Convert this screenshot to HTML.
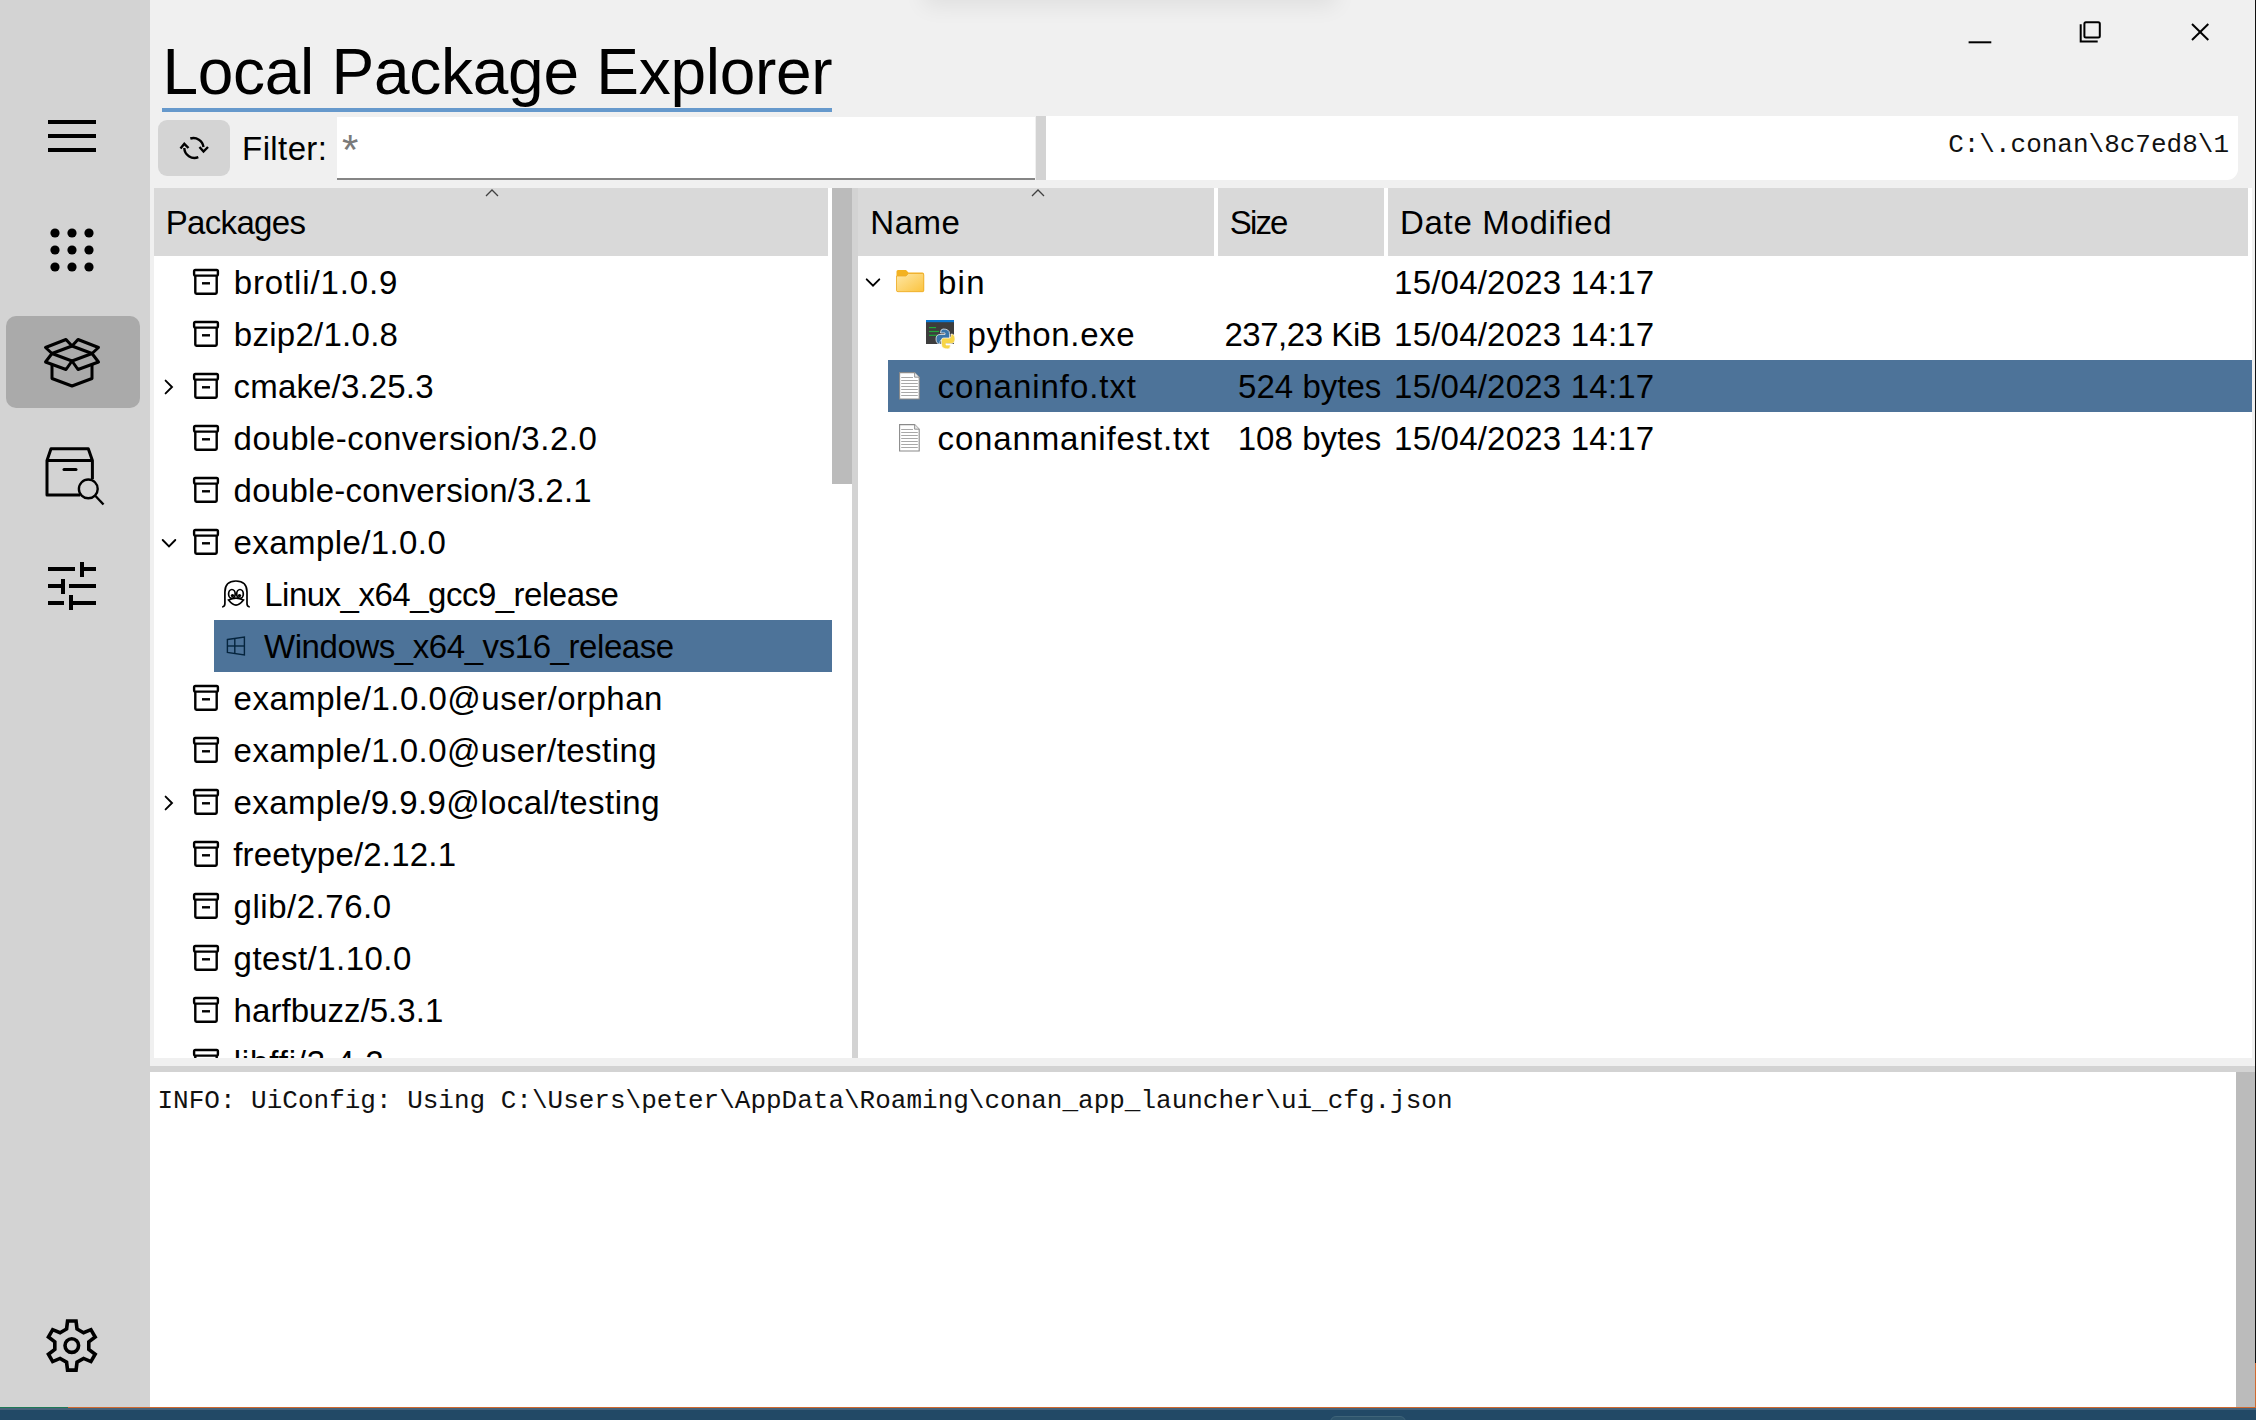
<!DOCTYPE html>
<html><head><meta charset="utf-8">
<style>
html,body{margin:0;padding:0;}
body{width:2256px;height:1420px;position:relative;overflow:hidden;background:#f0f0f0;font-family:"Liberation Sans",sans-serif;}
.a{position:absolute;}
.t{position:absolute;line-height:0;white-space:pre;font-family:"Liberation Sans",sans-serif;}
.m{position:absolute;line-height:0;white-space:pre;font-family:"Liberation Mono",monospace;}
svg{position:absolute;overflow:visible;}
</style></head><body>
<!-- top shadow -->
<div class="a" style="left:930px;top:-30px;width:400px;height:30px;box-shadow:0 0 22px 6px rgba(0,0,0,0.07);background:#000;"></div>
<!-- sidebar -->
<div class="a" style="left:0;top:0;width:150px;height:1407px;background:#d3d3d3;"></div>
<div class="a" style="left:6px;top:316px;width:134px;height:92px;background:#aaaaaa;border-radius:10px;"></div>
<!-- hamburger -->
<div class="a" style="left:48px;top:120px;width:48px;height:4px;background:#000;"></div>
<div class="a" style="left:48px;top:134px;width:48px;height:4px;background:#000;"></div>
<div class="a" style="left:48px;top:148px;width:48px;height:4px;background:#000;"></div>
<!-- dots -->
<svg style="left:0;top:0" width="150" height="300">
<g fill="#000">
<circle cx="55" cy="233" r="4.6"/><circle cx="72" cy="233" r="4.6"/><circle cx="89" cy="233" r="4.6"/>
<circle cx="55" cy="250" r="4.6"/><circle cx="72" cy="250" r="4.6"/><circle cx="89" cy="250" r="4.6"/>
<circle cx="55" cy="267" r="4.6"/><circle cx="72" cy="267" r="4.6"/><circle cx="89" cy="267" r="4.6"/>
</g></svg>
<!-- open box -->
<svg style="left:0;top:0" width="150" height="420">
<g fill="none" stroke="#000" stroke-width="3" stroke-linejoin="round">
<polygon points="72,346 52,353.5 72,361 92,353.5"/>
<polyline points="52,353.5 45.5,347.5 66,339.5 72,346 78,339.5 98.5,347.5 92,353.5"/>
<polyline points="52,353.5 45.5,362 66,369.5 72,361 78,369.5 98.5,362 92,353.5"/>
<polyline points="52,364.5 52,378.5 72,386 92,378.5 92,364.5"/>
</g></svg>
<!-- archive search -->
<svg style="left:0;top:0" width="150" height="520">
<g fill="none" stroke="#000" stroke-width="3" stroke-linejoin="round">
<polyline points="80,495 47,495 47,460.5 51,448.7 88.3,448.7 92.4,460.5 92.4,479"/>
<line x1="47" y1="460.5" x2="92.4" y2="460.5"/>
<line x1="64" y1="469.6" x2="76" y2="469.6" stroke-linecap="round"/>
</g>
<circle cx="88.3" cy="488.9" r="9.4" fill="none" stroke="#000" stroke-width="2.4"/>
<line x1="95.5" y1="496" x2="103.5" y2="504.5" stroke="#000" stroke-width="2.4"/>
</svg>
<!-- sliders -->
<div class="a" style="left:48px;top:567px;width:27px;height:4px;background:#000"></div>
<div class="a" style="left:83.5px;top:567px;width:12.5px;height:4px;background:#000"></div>
<div class="a" style="left:79.5px;top:562px;width:4px;height:15px;background:#000"></div>
<div class="a" style="left:48px;top:584px;width:12.5px;height:4px;background:#000"></div>
<div class="a" style="left:68.5px;top:584px;width:27.5px;height:4px;background:#000"></div>
<div class="a" style="left:60.5px;top:578.5px;width:4px;height:15px;background:#000"></div>
<div class="a" style="left:48px;top:600.5px;width:16px;height:4px;background:#000"></div>
<div class="a" style="left:72.5px;top:600.5px;width:23.5px;height:4px;background:#000"></div>
<div class="a" style="left:68.5px;top:595px;width:4px;height:15px;background:#000"></div>
<!-- gear -->
<svg style="left:0;top:0" width="150" height="1400">
<path id="gear" fill="none" stroke="#000" stroke-width="3.6" stroke-linejoin="miter" d="M66.57,1329.01 L67.56,1321.06 L76.04,1321.06 L77.03,1329.01 L83.56,1332.77 L90.93,1329.66 L95.17,1337.00 L88.79,1341.83 L88.79,1349.37 L95.17,1354.20 L90.93,1361.54 L83.56,1358.43 L77.03,1362.19 L76.04,1370.14 L67.56,1370.14 L66.57,1362.19 L60.04,1358.43 L52.67,1361.54 L48.43,1354.20 L54.81,1349.37 L54.81,1341.83 L48.43,1337.00 L52.67,1329.66 L60.04,1332.77 Z"/>
<circle cx="71.8" cy="1345.6" r="6.8" fill="none" stroke="#000" stroke-width="3.6"/>
</svg>

<!-- title underline -->
<div class="a" style="left:162px;top:108px;width:670px;height:4px;background:#6699cc;"></div>
<!-- window controls -->
<svg style="left:0;top:0" width="2256" height="60">
<g fill="none" stroke="#000" stroke-width="2">
<line x1="1968.6" y1="42.3" x2="1991.3" y2="42.3"/>
<rect x="2084.4" y="22.2" width="15.4" height="15.4" rx="1.5"/>
<path d="M2080.7,24.3 V41.5 H2097.7"/>
<line x1="2192" y1="24" x2="2208.3" y2="40"/>
<line x1="2208.3" y1="24" x2="2192" y2="40"/>
</g></svg>
<!-- refresh button -->
<div class="a" style="left:158px;top:120px;width:72px;height:56px;background:#d4d4d4;border-radius:9px;"></div>
<svg style="left:0;top:0" width="300" height="200">
<g fill="none" stroke="#000" stroke-width="2.4">
<path d="M190.3,138.5 A10.2,10.2 0 0 1 203.5,147"/>
<path d="M198.3,157.2 A10.2,10.2 0 0 1 184.3,148"/>
<polyline points="180.5,148.5 184.3,143.8 188.5,148"/>
<polyline points="199.5,147 203.5,151.5 208,147"/>
</g></svg>
<!-- filter input -->
<div class="a" style="left:336.5px;top:117px;width:698.5px;height:61px;background:#fff;border-bottom:2px solid #858585;"></div>
<div class="t" style="left:342px;top:149.5px;font-size:42px;color:#7a7a7a;">*</div>
<div class="a" style="left:1036px;top:116px;width:10px;height:64px;background:#d3d3d3;"></div>
<div class="a" style="left:1046px;top:116px;width:1192px;height:64px;background:#fff;border-bottom-right-radius:11px;"></div>
<div class="m" style="right:27px;top:145px;font-size:26px;color:#111;">C:\.conan\8c7ed8\1</div>

<!-- left panel -->
<div class="a" style="left:154px;top:188px;width:698px;height:870px;background:#fff;"></div>
<div class="a" style="left:154px;top:188px;width:674px;height:68px;background:#d9d9d9;"></div>
<div class="a" style="left:832px;top:188px;width:20px;height:296px;background:#bbbbbb;"></div>
<div class="a" style="left:852px;top:188px;width:6px;height:870px;background:#d3d3d3;"></div>
<div class="a" style="left:214px;top:620px;width:618px;height:52px;background:#4d7399;"></div>
<svg style="left:0;top:0" width="900" height="1060">
<g fill="none" stroke="#404040" stroke-width="1.3"><polyline points="486,196 492,190 498,196"/><polyline points="1032,196 1038,190 1044,196"/></g>
</svg>

<!-- right panel -->
<div class="a" style="left:858px;top:188px;width:1394px;height:870px;background:#fff;"></div>
<div class="a" style="left:858px;top:188px;width:356px;height:68px;background:#d9d9d9;"></div>
<div class="a" style="left:1218px;top:188px;width:166px;height:68px;background:#d9d9d9;"></div>
<div class="a" style="left:1388px;top:188px;width:860px;height:68px;background:#d9d9d9;"></div>
<div class="a" style="left:888px;top:360px;width:1364px;height:52px;background:#4d7399;"></div>
<svg style="left:0;top:0" width="2256" height="260">
<g fill="none" stroke="#404040" stroke-width="1.3"><polyline points="1032,196 1038,190 1044,196"/></g>
</svg>

<!-- tree icons -->
<div class="a" style="left:0;top:0;width:2256px;height:1058px;overflow:hidden;"><svg style="left:0;top:0" width="2256" height="1060"><g transform="translate(0,0)" fill="none" stroke="#000" stroke-width="2.4"><rect x="194.1" y="270" width="23.8" height="5.6" rx="1.3"/><path d="M195.3,275.8 V292.6 Q195.3,293.8 196.5,293.8 H215.5 Q216.7,293.8 216.7,292.6 V275.8"/><line x1="202" y1="283.3" x2="210" y2="283.3"/></g>
<g transform="translate(0,52)" fill="none" stroke="#000" stroke-width="2.4"><rect x="194.1" y="270" width="23.8" height="5.6" rx="1.3"/><path d="M195.3,275.8 V292.6 Q195.3,293.8 196.5,293.8 H215.5 Q216.7,293.8 216.7,292.6 V275.8"/><line x1="202" y1="283.3" x2="210" y2="283.3"/></g>
<g transform="translate(0,104)" fill="none" stroke="#000" stroke-width="2.4"><rect x="194.1" y="270" width="23.8" height="5.6" rx="1.3"/><path d="M195.3,275.8 V292.6 Q195.3,293.8 196.5,293.8 H215.5 Q216.7,293.8 216.7,292.6 V275.8"/><line x1="202" y1="283.3" x2="210" y2="283.3"/></g>
<polyline points="165.6,380.6 172,387 165.6,393.4" fill="none" stroke="#000" stroke-width="1.9" stroke-linecap="round"/>
<g transform="translate(0,156)" fill="none" stroke="#000" stroke-width="2.4"><rect x="194.1" y="270" width="23.8" height="5.6" rx="1.3"/><path d="M195.3,275.8 V292.6 Q195.3,293.8 196.5,293.8 H215.5 Q216.7,293.8 216.7,292.6 V275.8"/><line x1="202" y1="283.3" x2="210" y2="283.3"/></g>
<g transform="translate(0,208)" fill="none" stroke="#000" stroke-width="2.4"><rect x="194.1" y="270" width="23.8" height="5.6" rx="1.3"/><path d="M195.3,275.8 V292.6 Q195.3,293.8 196.5,293.8 H215.5 Q216.7,293.8 216.7,292.6 V275.8"/><line x1="202" y1="283.3" x2="210" y2="283.3"/></g>
<g transform="translate(0,260)" fill="none" stroke="#000" stroke-width="2.4"><rect x="194.1" y="270" width="23.8" height="5.6" rx="1.3"/><path d="M195.3,275.8 V292.6 Q195.3,293.8 196.5,293.8 H215.5 Q216.7,293.8 216.7,292.6 V275.8"/><line x1="202" y1="283.3" x2="210" y2="283.3"/></g>
<polyline points="162.7,540 169,546.3 175.3,540" fill="none" stroke="#000" stroke-width="1.9" stroke-linecap="round"/>
<g transform="translate(0,416)" fill="none" stroke="#000" stroke-width="2.4"><rect x="194.1" y="270" width="23.8" height="5.6" rx="1.3"/><path d="M195.3,275.8 V292.6 Q195.3,293.8 196.5,293.8 H215.5 Q216.7,293.8 216.7,292.6 V275.8"/><line x1="202" y1="283.3" x2="210" y2="283.3"/></g>
<g transform="translate(0,468)" fill="none" stroke="#000" stroke-width="2.4"><rect x="194.1" y="270" width="23.8" height="5.6" rx="1.3"/><path d="M195.3,275.8 V292.6 Q195.3,293.8 196.5,293.8 H215.5 Q216.7,293.8 216.7,292.6 V275.8"/><line x1="202" y1="283.3" x2="210" y2="283.3"/></g>
<g transform="translate(0,520)" fill="none" stroke="#000" stroke-width="2.4"><rect x="194.1" y="270" width="23.8" height="5.6" rx="1.3"/><path d="M195.3,275.8 V292.6 Q195.3,293.8 196.5,293.8 H215.5 Q216.7,293.8 216.7,292.6 V275.8"/><line x1="202" y1="283.3" x2="210" y2="283.3"/></g>
<polyline points="165.6,796.6 172,803 165.6,809.4" fill="none" stroke="#000" stroke-width="1.9" stroke-linecap="round"/>
<g transform="translate(0,572)" fill="none" stroke="#000" stroke-width="2.4"><rect x="194.1" y="270" width="23.8" height="5.6" rx="1.3"/><path d="M195.3,275.8 V292.6 Q195.3,293.8 196.5,293.8 H215.5 Q216.7,293.8 216.7,292.6 V275.8"/><line x1="202" y1="283.3" x2="210" y2="283.3"/></g>
<g transform="translate(0,624)" fill="none" stroke="#000" stroke-width="2.4"><rect x="194.1" y="270" width="23.8" height="5.6" rx="1.3"/><path d="M195.3,275.8 V292.6 Q195.3,293.8 196.5,293.8 H215.5 Q216.7,293.8 216.7,292.6 V275.8"/><line x1="202" y1="283.3" x2="210" y2="283.3"/></g>
<g transform="translate(0,676)" fill="none" stroke="#000" stroke-width="2.4"><rect x="194.1" y="270" width="23.8" height="5.6" rx="1.3"/><path d="M195.3,275.8 V292.6 Q195.3,293.8 196.5,293.8 H215.5 Q216.7,293.8 216.7,292.6 V275.8"/><line x1="202" y1="283.3" x2="210" y2="283.3"/></g>
<g transform="translate(0,728)" fill="none" stroke="#000" stroke-width="2.4"><rect x="194.1" y="270" width="23.8" height="5.6" rx="1.3"/><path d="M195.3,275.8 V292.6 Q195.3,293.8 196.5,293.8 H215.5 Q216.7,293.8 216.7,292.6 V275.8"/><line x1="202" y1="283.3" x2="210" y2="283.3"/></g>
<g transform="translate(0,780)" fill="none" stroke="#000" stroke-width="2.4"><rect x="194.1" y="270" width="23.8" height="5.6" rx="1.3"/><path d="M195.3,275.8 V292.6 Q195.3,293.8 196.5,293.8 H215.5 Q216.7,293.8 216.7,292.6 V275.8"/><line x1="202" y1="283.3" x2="210" y2="283.3"/></g>
<g fill="none" stroke="#000" stroke-width="1.7" stroke-linecap="round">
<path d="M222.8,606.8 Q224.9,606.2 224.9,603.5 V592 Q224.9,581 235.9,581 Q247,581 247,592 V603.5 Q247,606.2 249.1,606.8"/>
<ellipse cx="231.9" cy="593.9" rx="3.3" ry="4.4"/>
<ellipse cx="240" cy="593.9" rx="3.3" ry="4.4"/>
<path d="M228.5,600 Q236,596.3 243.5,600 Q239.5,605 236,605.2 Q232.5,605 228.5,600 Z"/>
</g>
<circle cx="232.5" cy="595.6" r="1.7" fill="#000"/><circle cx="239.5" cy="595.6" r="1.7" fill="#000"/>
<g fill="none" stroke="#05243d" stroke-width="1.4">
<polygon points="227.4,639.5 244.4,637 244.4,654.9 227.4,652.5"/>
<line x1="234.8" y1="638.5" x2="234.8" y2="653.5"/><line x1="227.4" y1="646" x2="244.4" y2="646"/>
</g>
<polyline points="866.7,279.3 873,285.6 879.3,279.3" fill="none" stroke="#000" stroke-width="1.9" stroke-linecap="round"/>
<defs><linearGradient id="fg" x1="0" y1="0" x2="1" y2="1"><stop offset="0" stop-color="#fee7a6"/><stop offset="1" stop-color="#fbc33e"/></linearGradient></defs>
<path d="M896.5,271.5 Q896.5,270 898,270 H906 L908.5,272.5 H922.5 Q924,272.5 924,274 V290.3 Q924,291.8 922.5,291.8 H898 Q896.5,291.8 896.5,290.3 Z" fill="#f3b221"/>
<path d="M896.5,276 H906 L908.5,273.5 H922.5 Q923.8,273.5 923.8,275 V290.3 Q923.8,291.7 922.5,291.7 H898 Q896.5,291.7 896.5,290.3 Z" fill="url(#fg)" stroke="#eeac28" stroke-width="0.8"/>
<rect x="926" y="320" width="28" height="24" fill="#3d3d3d"/>
<rect x="926" y="320" width="28" height="2.2" fill="#0a78d4"/>
<g stroke="#22a83a" stroke-width="1.2"><line x1="929" y1="327.6" x2="936" y2="327.6"/><line x1="929" y1="331.5" x2="939" y2="331.5"/><line x1="929" y1="335.3" x2="937" y2="335.3"/></g>
<path d="M943,329 Q949.5,329 949.5,333.5 V338 Q949.5,340 947.5,340 H942 Q940,340 940,342 V344 Q936,344 936,339 Q936,334.5 940,334.5 H945 V333 H940.5 Q940.5,329 943,329 Z" fill="#3a75a8" stroke="#fff" stroke-width="0.7"/>
<path d="M948,349 Q941.5,349 941.5,344.5 V340 Q941.5,338 943.5,338 H949 Q951,338 951,336 V334 Q955,334 955,339 Q955,343.5 951,343.5 H946 V345 H950.5 Q950.5,349 948,349 Z" fill="#f7d548" stroke="#fff" stroke-width="0.7"/>
<path d="M899.6,372.6 H914.6 L919.2,377.2 V399 H899.6 Z" fill="#fff" stroke="#8a8a8a" stroke-width="1.1"/><path d="M914.6,372.6 V377.2 H919.2" fill="#e8e8e8" stroke="#8a8a8a" stroke-width="0.9"/><line x1="901.2" y1="377.5" x2="913" y2="377.5" stroke="#a8a8a8" stroke-width="1"/><line x1="901.2" y1="380.5" x2="917.8" y2="380.5" stroke="#a8a8a8" stroke-width="1"/><line x1="901.2" y1="383.5" x2="917.8" y2="383.5" stroke="#a8a8a8" stroke-width="1"/><line x1="901.2" y1="386.5" x2="917.8" y2="386.5" stroke="#a8a8a8" stroke-width="1"/><line x1="901.2" y1="389.5" x2="917.8" y2="389.5" stroke="#a8a8a8" stroke-width="1"/><line x1="901.2" y1="392.5" x2="917.8" y2="392.5" stroke="#a8a8a8" stroke-width="1"/><line x1="901.2" y1="395.5" x2="917.8" y2="395.5" stroke="#a8a8a8" stroke-width="1"/>
<path d="M899.6,424.6 H914.6 L919.2,429.2 V451 H899.6 Z" fill="#fff" stroke="#8a8a8a" stroke-width="1.1"/><path d="M914.6,424.6 V429.2 H919.2" fill="#e8e8e8" stroke="#8a8a8a" stroke-width="0.9"/><line x1="901.2" y1="429.5" x2="913" y2="429.5" stroke="#a8a8a8" stroke-width="1"/><line x1="901.2" y1="432.5" x2="917.8" y2="432.5" stroke="#a8a8a8" stroke-width="1"/><line x1="901.2" y1="435.5" x2="917.8" y2="435.5" stroke="#a8a8a8" stroke-width="1"/><line x1="901.2" y1="438.5" x2="917.8" y2="438.5" stroke="#a8a8a8" stroke-width="1"/><line x1="901.2" y1="441.5" x2="917.8" y2="441.5" stroke="#a8a8a8" stroke-width="1"/><line x1="901.2" y1="444.5" x2="917.8" y2="444.5" stroke="#a8a8a8" stroke-width="1"/><line x1="901.2" y1="447.5" x2="917.8" y2="447.5" stroke="#a8a8a8" stroke-width="1"/></svg></div>

<!-- bottom log -->
<div class="a" style="left:150px;top:1066px;width:2105px;height:6px;background:#d3d3d3;"></div>
<div class="a" style="left:150px;top:1072px;width:2086px;height:335px;background:#fff;"></div>
<div class="a" style="left:2236px;top:1072px;width:19px;height:335px;background:#bbbbbb;"></div>
<div class="m" style="left:157.5px;top:1101px;font-size:26px;color:#111;">INFO: UiConfig: Using C:\Users\peter\AppData\Roaming\conan_app_launcher\ui_cfg.json</div>

<!-- window border / taskbar -->
<div class="a" style="left:2255px;top:0;width:1px;height:1363px;background:#111;"></div>
<div class="a" style="left:2255px;top:1363px;width:1px;height:44px;background:#d06a30;"></div>
<div class="a" style="left:0;top:1407px;width:2256px;height:1px;background:#d06a30;"></div>
<div class="a" style="left:0;top:1407px;width:68px;height:1px;background:#1f7a55;"></div>
<div class="a" style="left:0;top:1408px;width:2256px;height:2px;background:#46627a;"></div>
<div class="a" style="left:0;top:1410px;width:2256px;height:10px;background:#224966;"></div>
<div class="a" style="left:1330px;top:1416px;width:76px;height:12px;background:#2d546c;border:1px solid #3f6479;border-radius:7px;box-sizing:border-box;"></div>

<div class="a" style="left:0;top:0;width:2256px;height:1058px;overflow:hidden;"><div class="t" style="left:162.4px;top:71.6px;font-size:64px;letter-spacing:-0.270px;color:#000">Local Package Explorer</div>
<div class="t" style="left:242.1px;top:148.8px;font-size:33px;letter-spacing:0.387px;color:#000">Filter:</div>
<div class="t" style="left:165.8px;top:223.4px;font-size:33px;letter-spacing:-0.686px;color:#000">Packages</div>
<div class="t" style="left:870.3px;top:223.4px;font-size:33px;letter-spacing:0.550px;color:#000">Name</div>
<div class="t" style="left:1229.8px;top:223.4px;font-size:33px;letter-spacing:-1.861px;color:#000">Size</div>
<div class="t" style="left:1400.1px;top:223.4px;font-size:33px;letter-spacing:0.662px;color:#000">Date Modified</div>
<div class="t" style="left:233.8px;top:282.6px;font-size:33px;letter-spacing:0.864px;color:#000">brotli/1.0.9</div>
<div class="t" style="left:233.8px;top:334.6px;font-size:33px;letter-spacing:0.271px;color:#000">bzip2/1.0.8</div>
<div class="t" style="left:233.6px;top:386.6px;font-size:33px;letter-spacing:0.163px;color:#000">cmake/3.25.3</div>
<div class="t" style="left:233.6px;top:438.6px;font-size:33px;letter-spacing:0.496px;color:#000">double-conversion/3.2.0</div>
<div class="t" style="left:233.6px;top:490.6px;font-size:33px;letter-spacing:0.267px;color:#000">double-conversion/3.2.1</div>
<div class="t" style="left:233.6px;top:542.6px;font-size:33px;letter-spacing:0.405px;color:#000">example/1.0.0</div>
<div class="t" style="left:264.2px;top:594.6px;font-size:33px;letter-spacing:-0.495px;color:#000">Linux_x64_gcc9_release</div>
<div class="t" style="left:264.0px;top:646.6px;font-size:33px;letter-spacing:-0.431px;color:#000">Windows_x64_vs16_release</div>
<div class="t" style="left:233.6px;top:698.6px;font-size:33px;letter-spacing:0.495px;color:#000">example/1.0.0@user/orphan</div>
<div class="t" style="left:233.6px;top:750.6px;font-size:33px;letter-spacing:0.468px;color:#000">example/1.0.0@user/testing</div>
<div class="t" style="left:233.6px;top:802.6px;font-size:33px;letter-spacing:0.417px;color:#000">example/9.9.9@local/testing</div>
<div class="t" style="left:233.2px;top:854.6px;font-size:33px;letter-spacing:0.192px;color:#000">freetype/2.12.1</div>
<div class="t" style="left:233.6px;top:906.6px;font-size:33px;letter-spacing:0.520px;color:#000">glib/2.76.0</div>
<div class="t" style="left:233.6px;top:958.6px;font-size:33px;letter-spacing:0.483px;color:#000">gtest/1.10.0</div>
<div class="t" style="left:233.6px;top:1010.6px;font-size:33px;letter-spacing:0.043px;color:#000">harfbuzz/5.3.1</div>
<div class="t" style="left:233.7px;top:1062.6px;font-size:33px;letter-spacing:0.843px;color:#000">libffi/3.4.2</div>
<div class="t" style="left:937.9px;top:282.6px;font-size:33px;letter-spacing:1.316px;color:#000">bin</div>
<div class="t" style="left:1394.1px;top:282.6px;font-size:33px;letter-spacing:0.213px;color:#000">15/04/2023 14:17</div>
<div class="t" style="left:967.4px;top:334.6px;font-size:33px;letter-spacing:0.650px;color:#000">python.exe</div>
<div class="t" style="left:1394.1px;top:334.6px;font-size:33px;letter-spacing:0.213px;color:#000">15/04/2023 14:17</div>
<div class="t" style="left:1224.4px;top:334.6px;font-size:33px;letter-spacing:-0.449px;color:#000">237,23 KiB</div>
<div class="t" style="left:937.6px;top:386.6px;font-size:33px;letter-spacing:0.941px;color:#000">conaninfo.txt</div>
<div class="t" style="left:1394.1px;top:386.6px;font-size:33px;letter-spacing:0.213px;color:#000">15/04/2023 14:17</div>
<div class="t" style="left:1238.1px;top:386.6px;font-size:33px;letter-spacing:0.014px;color:#000">524 bytes</div>
<div class="t" style="left:937.6px;top:438.6px;font-size:33px;letter-spacing:0.826px;color:#000">conanmanifest.txt</div>
<div class="t" style="left:1394.1px;top:438.6px;font-size:33px;letter-spacing:0.213px;color:#000">15/04/2023 14:17</div>
<div class="t" style="left:1237.7px;top:438.6px;font-size:33px;letter-spacing:0.060px;color:#000">108 bytes</div></div>
</body></html>
